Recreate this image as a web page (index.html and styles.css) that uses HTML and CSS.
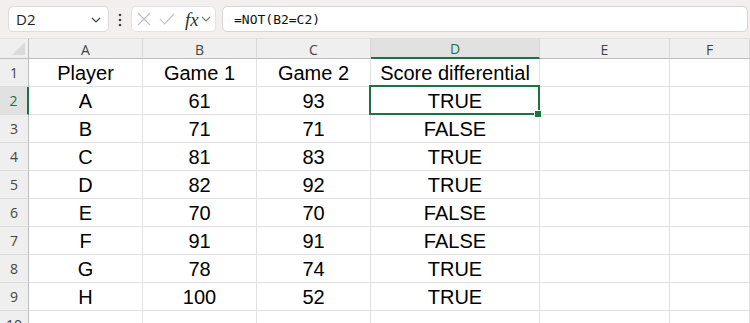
FILE: index.html
```html
<!DOCTYPE html>
<html lang="en">
<head>
<meta charset="UTF-8">
<title>Score differential</title>
<link rel="stylesheet" href="styles.css">
</head>
<body>

<div class="toolbar">
<div class="namebox">
<span>D2</span>
<svg class="chev" width="10" height="6" viewBox="0 0 10 6"><path d="M1 1l4 4 4-4" fill="none" stroke="#444" stroke-width="1.2"/></svg>
</div>
<svg class="dots" width="4" height="14" viewBox="0 0 4 14"><circle cx="2" cy="2" r="1.3" fill="#444"/><circle cx="2" cy="7" r="1.3" fill="#444"/><circle cx="2" cy="12" r="1.3" fill="#444"/></svg>
<div class="fxbox">
<svg width="14" height="14" viewBox="0 0 14 14"><path d="M1 1l12 12M13 1L1 13" fill="none" stroke="#bdbdbd" stroke-width="1.1"/></svg>
<svg width="16" height="12" viewBox="0 0 16 12"><path d="M1 6l4.5 5L15 1" fill="none" stroke="#bdbdbd" stroke-width="1.1"/></svg>
<span class="fx">fx</span>
<svg width="10" height="6" viewBox="0 0 10 6"><path d="M1 1l4 4 4-4" fill="none" stroke="#777" stroke-width="1.1"/></svg>
</div>
<div class="formula">=NOT(B2=C2)</div>
</div>

<div id="sheet" class="sheet"></div>

<script>

const cols=["A","B","C","D","E","F"];

const rows=[
["Player","Game 1","Game 2","Score differential"],
["A","61","93","TRUE"],
["B","71","71","FALSE"],
["C","81","83","TRUE"],
["D","82","92","TRUE"],
["E","70","70","FALSE"],
["F","91","91","FALSE"],
["G","78","74","TRUE"],
["H","100","52","TRUE"],
["","","",""]
];

const sheet=document.getElementById("sheet");

function cell(cls,text){
const el=document.createElement("div");
el.className=cls;
el.textContent=text;
sheet.appendChild(el);
return el;
}

cell("corner","");

cols.forEach(c=>{
cell(c==="D"?"colhead active":"colhead",c);
});

rows.forEach((row,i)=>{
cell(i===1?"rowhead active":"rowhead",i+1);
cols.forEach((c,j)=>{
const el=cell("cell",row[j]||"");
if(i===1&&c==="D")el.classList.add("selected");
});
});

</script>

</body>
</html>
```

FILE: styles.css
```css
*{box-sizing:border-box;}

body{
margin:0;
background:#fff;
overflow:hidden;
font-family:"Liberation Sans",Arial,sans-serif;
}

.toolbar{
height:39px;
background:#f3efee;
border-bottom:1px solid #e2dedd;
display:flex;
align-items:flex-start;
padding:6px 0 0 8px;
}

.namebox{
width:101px;
height:26px;
background:#fff;
border:1px solid #dcdcdc;
border-radius:5px;
display:flex;
align-items:center;
justify-content:space-between;
padding:0 7px 0 7px;
font-family:"Open Sans",sans-serif;
font-size:15px;
color:#222;
}

.chev{
margin-top:1px;
}

.dots{
margin:7px 0 0 9px;
}

.fxbox{
width:85px;
height:26px;
margin-left:9px;
background:#fff;
border:1px solid #e3e3e3;
border-radius:5px;
display:flex;
align-items:center;
gap:8px;
padding:0 3px 0 5px;
}

.fx{
font-family:"Liberation Serif",serif;
font-style:italic;
font-size:19px;
color:#333;
margin-left:2px;
margin-right:-6px;
line-height:1;
}

.formula{
width:526px;
height:26px;
margin-left:6px;
background:#fff;
border:1px solid #d6d6d6;
border-radius:5px;
padding:0 0 0 11px;
display:flex;
align-items:center;
font-family:"DejaVu Sans Mono",monospace;
font-size:13px;
color:#111;
}

.sheet{
display:grid;
grid-template-columns:29px 114px 114px 114px 169px 130px 1fr;
grid-template-rows:20px;
grid-auto-rows:28px;
}

.corner{
background:#efefef;
border-right:1px solid #bdbdbd;
border-bottom:1px solid #bdbdbd;
position:relative;
}

.corner::after{
content:"";
position:absolute;
right:3px;
bottom:3px;
border-left:13px solid transparent;
border-bottom:13px solid #dadada;
}

.colhead{
background:#efefef;
border-right:1px solid #d8d8d8;
border-bottom:1px solid #bdbdbd;
display:flex;
align-items:center;
justify-content:center;
font-family:"Open Sans",sans-serif;
font-size:14px;
color:#444;
padding-top:1px;
}

.colhead.active{
background:#e1e1e1;
border-bottom:2px solid #1e7145;
color:#1e7145;
}

.rowhead{
background:#efefef;
border-right:1px solid #bdbdbd;
border-bottom:1px solid #dcdcdc;
display:flex;
align-items:center;
justify-content:center;
font-family:"Open Sans",sans-serif;
font-size:14px;
color:#444;
}

.rowhead.active{
background:#e1e1e1;
border-right:2px solid #1e7145;
color:#1e7145;
}

.cell{
border-right:1px solid #e1e1e1;
border-bottom:1px solid #e1e1e1;
display:flex;
align-items:center;
justify-content:center;
font-size:20px;
color:#000;
padding-top:1px;
white-space:nowrap;
}

.cell.selected{
position:relative;
}

.cell.selected::after{
content:"";
position:absolute;
top:-2px;
left:-2px;
right:-1px;
bottom:-1px;
border:2px solid #1e7145;
z-index:1;
}

.cell.selected::before{
content:"";
position:absolute;
right:-3px;
bottom:-4px;
width:6px;
height:6px;
background:#1e7145;
border:1px solid #fff;
z-index:2;
}
```
